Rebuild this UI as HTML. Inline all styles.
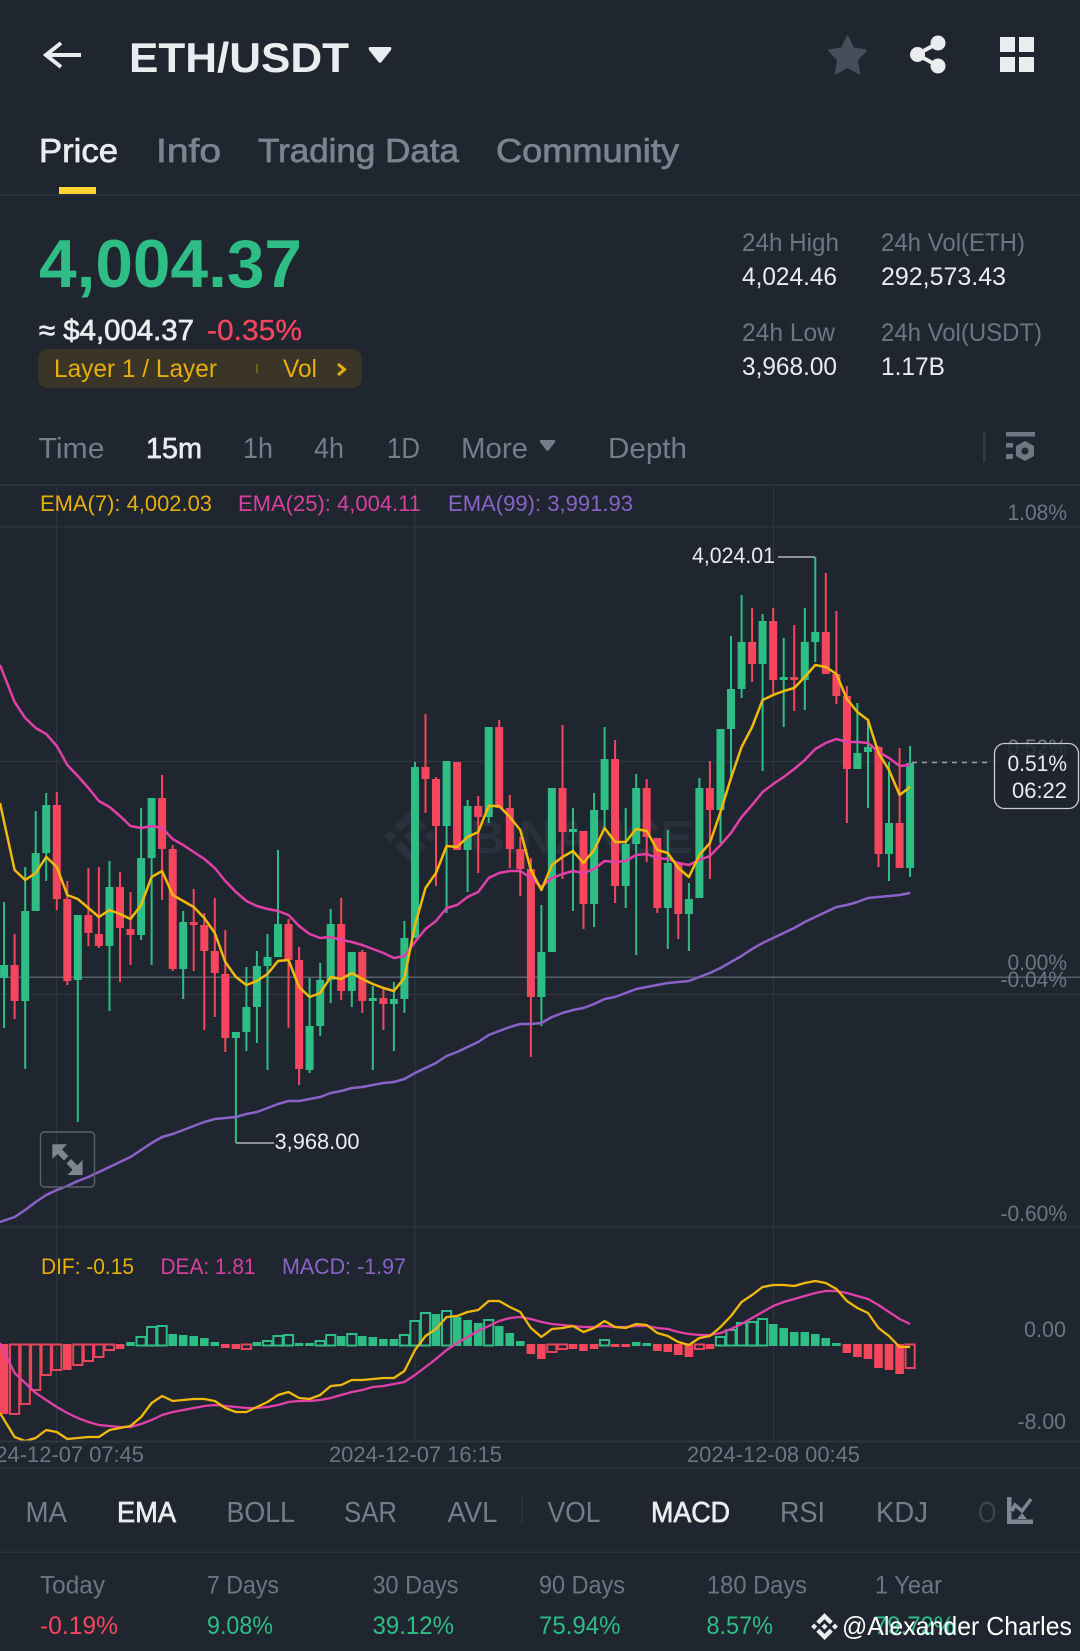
<!DOCTYPE html>
<html lang="en"><head><meta charset="utf-8"><title>ETH/USDT</title>
<style>
html,body{margin:0;padding:0;background:#1f2630;width:1080px;height:1651px;overflow:hidden}
svg{display:block}
text{font-family:"Liberation Sans","DejaVu Sans",sans-serif}
.g{fill:#757d8b}.w{fill:#eaecef}.d{fill:#6d7583}
.m{stroke-width:.7px}
</style></head><body>
<svg xmlns="http://www.w3.org/2000/svg" width="1080" height="1651" viewBox="0 0 1080 1651">
<rect width="1080" height="1651" fill="#1f2630"/>
<!-- header -->
<path d="M81 55H47M61 43L46 55L61 67" fill="none" stroke="#eaecef" stroke-width="4"/>
<text x="129" y="72" font-size="42" font-weight="700" fill="#eaecef" textLength="220" lengthAdjust="spacingAndGlyphs">ETH/USDT</text>
<path d="M370 47H390Q392 47 391 50L381.500 62Q380 63.500 378.500 62L369 50Q368 47 370 47Z" fill="#eaecef"/>
<path d="M847.500 36.500L853.300 48.500L866 50.500L856.800 59.800L859.300 73.500L847.500 67L835.700 73.500L838.200 59.800L829 50.500L841.700 48.500Z" fill="#474d5a" stroke="#474d5a" stroke-width="2" stroke-linejoin="round"/>
<path d="M938 43L917 54.500L938 66" fill="none" stroke="#eaecef" stroke-width="4"/>
<circle cx="938" cy="43" r="7.500" fill="#eaecef"/><circle cx="917.500" cy="54.500" r="7.500" fill="#eaecef"/><circle cx="938" cy="66" r="7.500" fill="#eaecef"/>
<path d="M1000 37h15v15h-15zM1019 37h15v15h-15zM1000 57h15v15h-15zM1019 57h15v15h-15z" fill="#eaecef"/>
<!-- tabs -->
<text x="39" y="162" font-size="33" fill="#eaecef" stroke="#eaecef" class="m" textLength="79" lengthAdjust="spacingAndGlyphs">Price</text>
<text x="156" y="162" font-size="33" fill="#7b8391" stroke="#7b8391" class="m" textLength="65" lengthAdjust="spacingAndGlyphs">Info</text>
<text x="258" y="162" font-size="33" fill="#7b8391" stroke="#7b8391" class="m" textLength="201" lengthAdjust="spacingAndGlyphs">Trading Data</text>
<text x="496" y="162" font-size="33" fill="#7b8391" stroke="#7b8391" class="m" textLength="183" lengthAdjust="spacingAndGlyphs">Community</text>
<rect x="59" y="187" width="37" height="7" fill="#fcd535"/>
<rect y="194.500" width="1080" height="1.500" fill="#2c333e"/>
<!-- price -->
<text x="39" y="287" font-size="68" font-weight="700" fill="#2ebd85" textLength="263" lengthAdjust="spacingAndGlyphs">4,004.37</text>
<text x="39" y="340" font-size="29" fill="#eaecef" stroke="#eaecef" class="m" textLength="155" lengthAdjust="spacingAndGlyphs">≈ $4,004.37</text>
<text x="207" y="340" font-size="29" fill="#f6465d" stroke="#f6465d" stroke-width=".3" textLength="95" lengthAdjust="spacingAndGlyphs">-0.35%</text>
<rect x="38.500" y="349" width="323" height="39" rx="9" fill="#3a3527"/>
<text x="54" y="377" font-size="25" fill="#e8ae0c" textLength="163" lengthAdjust="spacingAndGlyphs">Layer 1 / Layer</text>
<rect x="256" y="364" width="2" height="9" fill="#6e5c20"/>
<text x="283" y="377" font-size="25" fill="#e8ae0c" textLength="34" lengthAdjust="spacingAndGlyphs">Vol</text>
<path d="M338 364L344.500 369.500L338 375" fill="none" stroke="#e8ae0c" stroke-width="3"/>
<text x="742" y="251" font-size="25" class="d" textLength="97" lengthAdjust="spacingAndGlyphs">24h High</text>
<text x="742" y="285" font-size="25" class="w" textLength="95" lengthAdjust="spacingAndGlyphs">4,024.46</text>
<text x="881" y="251" font-size="25" class="d" textLength="144" lengthAdjust="spacingAndGlyphs">24h Vol(ETH)</text>
<text x="881" y="285" font-size="25" class="w" textLength="125" lengthAdjust="spacingAndGlyphs">292,573.43</text>
<text x="742" y="341" font-size="25" class="d" textLength="93" lengthAdjust="spacingAndGlyphs">24h Low</text>
<text x="742" y="375" font-size="25" class="w" textLength="95" lengthAdjust="spacingAndGlyphs">3,968.00</text>
<text x="881" y="341" font-size="25" class="d" textLength="161" lengthAdjust="spacingAndGlyphs">24h Vol(USDT)</text>
<text x="881" y="375" font-size="25" class="w" textLength="64" lengthAdjust="spacingAndGlyphs">1.17B</text>
<!-- timeframes -->
<text x="38.500" y="458" font-size="29" class="g" textLength="66" lengthAdjust="spacingAndGlyphs">Time</text>
<text x="146" y="458" font-size="29" fill="#eaecef" stroke="#eaecef" class="m" textLength="56" lengthAdjust="spacingAndGlyphs">15m</text>
<text x="243" y="458" font-size="29" class="g" textLength="30" lengthAdjust="spacingAndGlyphs">1h</text>
<text x="314" y="458" font-size="29" class="g" textLength="30" lengthAdjust="spacingAndGlyphs">4h</text>
<text x="387" y="458" font-size="29" class="g" textLength="33" lengthAdjust="spacingAndGlyphs">1D</text>
<text x="461" y="458" font-size="29" class="g" textLength="67" lengthAdjust="spacingAndGlyphs">More</text>
<path d="M541 440H554Q556 440 555 442L549 450Q547.500 451.500 546 450L540 442Q539 440 541 440Z" fill="#757d8b"/>
<text x="608" y="458" font-size="29" class="g" textLength="79" lengthAdjust="spacingAndGlyphs">Depth</text>
<rect x="983" y="432" width="2.500" height="30" fill="#333a45"/>
<path d="M1006 432h29v4.500h-29zM1006 443h7v4.500h-7zM1006 454h7v5h-7z" fill="#6f7785"/>
<path d="M1025 441L1034 446V456L1025 461L1016 456V446Z" fill="#6f7785"/><circle cx="1025" cy="451" r="3.500" fill="#1f2630"/>
<rect y="484" width="1080" height="2" fill="#2c333e"/>
<!-- grid -->
<path d="M56.500 486V1441M415 486V1441M773.500 486V1441M0 527H1080M0 761.500H1080M0 994.500H1080M0 1227H1080" stroke="#2e3541" stroke-width="1.200" fill="none"/>
<rect y="976.500" width="1080" height="1.500" fill="#565d69"/>
<!-- watermark -->
<g transform="translate(384 810) scale(.42)" fill="#2a313c"><path d="M38.700 53.100L63 28.800l24.300 24.300 14.200-14.100L63 .5 24.500 39zM.5 63l14.200-14.200L28.900 63 14.700 77.200zM38.700 72.900L63 97.200l24.300-24.300 14.200 14.100L63 125.500 24.500 87zM97.100 63l14.200-14.200L125.500 63l-14.200 14.200zM77.400 63L63 48.600 48.600 63 63 77.400z"/></g>
<text x="470" y="853" font-size="46" font-weight="700" fill="#2a313c" textLength="223" lengthAdjust="spacingAndGlyphs">BINANCE</text>
<!-- candles: wicks -->
<path fill="none" stroke="#2ebd85" stroke-width="2" d="M4.100 902V1028M25.200 867V1069M35.700 811V911M46.200 793V881M77.800 915V1122M109.500 861V1011M141.100 808V940M151.600 798V965M183.200 911V999M235.900 1032V1143M246.400 967V1051M256.900 951V1043M267.500 934V1070M278 850V957M309.600 978V1073M320.200 963V1036M330.700 909V1003M351.800 952V1007M372.800 986V1070M393.900 982V1051M404.400 921V1013M415 762V938M446.600 761V913M467.600 800V892M488.700 727V823M541.400 905V1026M573 808V911M594.100 793V927M604.600 727V830M625.700 808V908M636.200 774V955M667.800 830V949M688.900 883V951M699.400 778V898M720.500 729V843M731 636V780M741.600 595V698M762.600 614V771M783.700 638V727M804.800 608V710M815.300 557V662M857.400 703V769M868 720V808M889 762V881M910.100 746V877"/>
<path fill="none" stroke="#f6465d" stroke-width="2" d="M14.600 934V1019M56.800 792V910M67.300 881V985M88.400 868V946M98.900 867V948M120 872V982M130.500 892V965M162.100 775V900M172.700 845V971M193.700 889V971M204.300 913V1030M214.800 898V1017M225.300 930V1052M288.500 919V1028M299.100 947V1085M341.200 898V1000M362.300 950V1013M383.400 988V1030M425.500 714V813M436 777V886M478.200 796V873M499.200 720V808M509.800 795V868M520.300 837V896M530.900 858V1057M562.500 725V879M583.500 831V929M615.100 740V903M646.700 779V862M657.300 838V913M678.300 863V939M709.900 761V879M752.100 608V682M773.200 608V695M794.200 625V711M825.800 573V674M836.400 611V704M846.900 686V823M878.500 746V867M899.600 748V868"/>
<!-- candles: bodies -->
<path fill="none" stroke="#2ebd85" stroke-width="8" d="M4.100 965V978M25.200 911V1001M35.700 853V911M46.200 805V853M77.800 915V980M109.500 887V946M141.100 858V935M151.600 798V858M183.200 922V969M235.900 1032V1038M246.400 1007V1032M256.900 966V1007M267.500 957V966M278 924V957M309.600 1026V1070M320.200 980V1026M330.700 924V980M351.800 952V991M372.800 998V1001M393.900 999V1004M404.400 938V999M415 767V938M446.600 761V826M467.600 806V850M488.700 727V817M541.400 952V997M551.900 788V952M573 829V832M594.100 810V904M604.600 759V810M625.700 844V886M636.200 788V844M667.800 863V908M688.900 899V914M699.400 788V898M720.500 729V810M731 689V729M741.600 642V689M762.600 621V664M783.700 677V680M804.800 642V680M815.300 632V642M857.400 753V769M868 747V752M889 823V854M910.100 763V868"/>
<path fill="none" stroke="#f6465d" stroke-width="8" d="M14.600 965V1001M56.800 805V899M67.300 899V981M88.400 915V933M98.900 934V946M120 887V928M130.500 929V935M162.100 798V849M172.700 849V969M193.700 922V925M204.300 925V951M214.800 951V973M225.300 974V1038M288.500 924V960M299.100 960V1069M341.200 924V991M362.300 952V1001M383.400 998V1004M425.500 767V779M436 779V826M457.100 762V850M478.200 806V817M499.200 727V808M509.800 808V849M520.300 849V869M530.900 869V997M562.500 788V832M583.500 831V904M615.100 759V886M646.700 788V837M657.300 838V908M678.300 863V914M709.900 788V810M752.100 642V664M773.200 621V680M794.200 677V680M825.800 632V674M836.400 674V696M846.900 696V769M878.500 747V854M899.600 823V868"/>
<!-- EMA lines -->
<polyline fill="none" stroke="#8a63c8" stroke-width="2.500" stroke-linejoin="round" points="0,1222 14.600,1217 25.200,1210 35.700,1202 46.200,1195 56.800,1190 67.300,1186 77.800,1181 88.400,1177 98.900,1172 109.500,1167 120,1162 130.500,1157 141.100,1150 151.600,1143 162.100,1137 172.700,1134 183.200,1130 193.700,1126 204.300,1122 214.800,1119 225.300,1118 235.900,1117 246.400,1114 256.900,1112 267.500,1108 278,1104 288.500,1101 299.100,1101 309.600,1099 320.200,1097 330.700,1093 341.200,1091 351.800,1088 362.300,1087 372.800,1085 383.400,1083 393.900,1082 404.400,1079 415,1073 425.500,1068 436,1063 446.600,1056 457.100,1052 467.600,1047 478.200,1042 488.700,1035 499.200,1031 509.800,1027 520.300,1024 530.900,1024 541.400,1023 551.900,1017 562.500,1013 573,1010 583.500,1008 594.100,1004 604.600,999 615.100,997 625.700,993 636.200,989 646.700,987 657.300,985 667.800,983 678.300,982 688.900,981 699.400,977 709.900,973 720.500,968 731,962 741.600,956 752.100,949 762.600,943 773.200,938 783.700,933 794.200,928 804.800,922 815.300,917 825.800,912 836.400,907 846.900,905 857.400,902 868,898 878.500,897 889,896 899.600,895 910.100,893"/>
<polyline fill="none" stroke="#e23fa9" stroke-width="2.500" stroke-linejoin="round" points="0,665 14.600,702 25.200,718 35.700,728 46.200,734 56.800,746 67.300,765 77.800,776 88.400,788 98.900,801 109.500,807 120,816 130.500,826 141.100,828 151.600,826 162.100,828 172.700,839 183.200,845 193.700,852 204.300,859 214.800,868 225.300,881 235.900,892 246.400,901 256.900,906 267.500,909 278,911 288.500,915 299.100,926 309.600,934 320.200,938 330.700,937 341.200,940 351.800,942 362.300,945 372.800,949 383.400,953 393.900,958 404.400,956 415,942 425.500,929 436,921 446.600,908 457.100,905 467.600,897 478.200,892 488.700,878 499.200,873 509.800,871 520.300,871 530.900,878 541.400,887 551.900,878 562.500,874 573,871 583.500,873 594.100,869 604.600,861 615.100,862 625.700,861 636.200,855 646.700,854 657.300,858 667.800,859 678.300,863 688.900,865 699.400,860 709.900,856 720.500,845 731,833 741.600,817 752.100,805 762.600,792 773.200,784 783.700,777 794.200,769 804.800,760 815.300,749 825.800,743 836.400,739 846.900,742 857.400,742 868,743 878.500,752 889,758 899.600,766 910.100,765"/>
<polyline fill="none" stroke="#f0b90b" stroke-width="2.500" stroke-linejoin="round" points="0,803 14.600,870 25.200,880 35.700,873 46.200,857 56.800,867 67.300,895 77.800,899 88.400,908 98.900,917 109.500,910 120,914 130.500,919 141.100,905 151.600,877 162.100,871 172.700,895 183.200,901 193.700,907 204.300,918 214.800,933 225.300,962 235.900,977 246.400,985 256.900,981 267.500,974 278,961 288.500,960 299.100,987 309.600,997 320.200,993 330.700,977 341.200,979 351.800,973 362.300,979 372.800,984 383.400,988 393.900,991 404.400,978 415,925 425.500,888 436,873 446.600,846 457.100,847 467.600,837 478.200,832 488.700,806 499.200,806 509.800,817 520.300,830 530.900,870 541.400,890 551.900,865 562.500,857 573,851 583.500,863 594.100,850 604.600,828 615.100,842 625.700,842 636.200,829 646.700,831 657.300,850 667.800,853 678.300,868 688.900,877 699.400,855 709.900,843 720.500,812 731,778 741.600,747 752.100,727 762.600,700 773.200,695 783.700,691 794.200,688 804.800,677 815.300,665 825.800,667 836.400,674 846.900,699 857.400,712 868,720 878.500,753 889,770 899.600,795 910.100,787"/>
<!-- chart labels -->
<text x="40" y="511" font-size="22" fill="#e8ae0c" textLength="172" lengthAdjust="spacingAndGlyphs">EMA(7): 4,002.03</text>
<text x="238" y="511" font-size="22" fill="#d8409f" textLength="183" lengthAdjust="spacingAndGlyphs">EMA(25): 4,004.11</text>
<text x="448" y="511" font-size="22" fill="#8a63c8" textLength="185" lengthAdjust="spacingAndGlyphs">EMA(99): 3,991.93</text>
<text x="1007.500" y="520" font-size="22" class="d" textLength="59.500" lengthAdjust="spacingAndGlyphs">1.08%</text>
<text x="1007.500" y="755" font-size="22" class="d" textLength="59.500" lengthAdjust="spacingAndGlyphs">0.52%</text>
<text x="1007.500" y="970" font-size="22" class="d" textLength="59.500" lengthAdjust="spacingAndGlyphs">0.00%</text>
<text x="1000.500" y="987" font-size="22" class="d" textLength="66.500" lengthAdjust="spacingAndGlyphs">-0.04%</text>
<text x="1000.500" y="1221" font-size="22" class="d" textLength="66.500" lengthAdjust="spacingAndGlyphs">-0.60%</text>
<path d="M778 557H815" stroke="#b0b4ba" stroke-width="1.500" fill="none"/>
<text x="692" y="563" font-size="22" class="w" textLength="83" lengthAdjust="spacingAndGlyphs">4,024.01</text>
<path d="M236 1143H274" stroke="#b0b4ba" stroke-width="1.500" fill="none"/>
<text x="274.500" y="1149" font-size="22" class="w" textLength="85" lengthAdjust="spacingAndGlyphs">3,968.00</text>
<path d="M912 762.500H990" stroke="#9ba0a8" stroke-width="1.500" stroke-dasharray="5 5" fill="none"/>
<rect x="994.500" y="743.500" width="84" height="65" rx="10" fill="#1f2630" fill-opacity=".82" stroke="#c9ccd1" stroke-width="1.300"/>
<text x="1007.500" y="771" font-size="22" class="w" textLength="59.500" lengthAdjust="spacingAndGlyphs">0.51%</text>
<text x="1012" y="798" font-size="22" class="w" textLength="55" lengthAdjust="spacingAndGlyphs">06:22</text>
<!-- expand button -->
<rect x="40.500" y="1132" width="54" height="55" rx="4" fill="none" stroke="#5a616d" stroke-width="1.400"/>
<path d="M52.300 1144.300H67.100L62 1149.500L68.500 1156L64 1160.500L57.500 1154L52.300 1159ZM82.600 1175H67.500L72.600 1169.800L66.500 1163.500L71 1159L77.300 1165.300L82.600 1160Z" fill="#7d8591"/>
<!-- MACD -->
<text x="41" y="1274" font-size="22" fill="#e8ae0c" textLength="93" lengthAdjust="spacingAndGlyphs">DIF: -0.15</text>
<text x="160.500" y="1274" font-size="22" fill="#d8409f" textLength="95" lengthAdjust="spacingAndGlyphs">DEA: 1.81</text>
<text x="282" y="1274" font-size="22" fill="#8a63c8" textLength="124" lengthAdjust="spacingAndGlyphs">MACD: -1.97</text>
<text x="1024" y="1337" font-size="22" class="d" textLength="42" lengthAdjust="spacingAndGlyphs">0.00</text>
<text x="1017.500" y="1429" font-size="22" class="d" textLength="48.500" lengthAdjust="spacingAndGlyphs">-8.00</text>
<path fill="none" stroke="#2ebd85" stroke-width="8.600" d="M130.500 1342V1346M172.700 1334V1346M183.200 1335V1346M193.700 1336V1346M204.300 1338V1346M214.800 1342V1346M256.900 1342V1346M299.100 1343V1346M309.600 1343V1346M341.200 1336V1346M362.300 1336V1346M372.800 1337V1346M383.400 1339V1346M393.900 1339V1346M436 1314V1346M457.100 1317V1346M467.600 1320V1346M478.200 1323V1346M499.200 1326V1346M509.800 1333V1346M520.300 1341V1346M636.200 1342V1346M646.700 1343V1346M773.200 1324V1346M783.700 1328V1346M794.200 1332V1346M804.800 1332V1346M815.300 1334V1346M825.800 1338V1346M836.400 1343V1346"/>
<path fill="none" stroke="#f6465d" stroke-width="8.600" d="M4.100 1344V1414M67.300 1344V1370M120 1344V1349M225.300 1344V1348M235.900 1344V1349M530.900 1344V1354M541.400 1344V1359M573 1344V1349M583.500 1344V1351M594.100 1344V1349M615.100 1344V1347M625.700 1344V1347M657.300 1344V1351M667.800 1344V1352M678.300 1344V1355M688.900 1344V1357M709.900 1344V1349M846.900 1344V1353M857.400 1344V1357M868 1344V1359M878.500 1344V1368M889 1344V1370M899.600 1344V1374"/>
<path fill="none" stroke="#2ebd85" stroke-width="2" d="M136.500 1337h9.200V1345.500h-9.200zM147 1327h9.200V1345.500h-9.200zM157.500 1326h9.200V1345.500h-9.200zM262.900 1341h9.200V1345.500h-9.200zM273.400 1336h9.200V1345.500h-9.200zM283.900 1335h9.200V1345.500h-9.200zM315.600 1341h9.200V1345.500h-9.200zM326.100 1335h9.200V1345.500h-9.200zM347.200 1334h9.200V1345.500h-9.200zM399.800 1335h9.200V1345.500h-9.200zM410.400 1321h9.200V1345.500h-9.200zM420.900 1313h9.200V1345.500h-9.200zM442 1311h9.200V1345.500h-9.200zM484.100 1320h9.200V1345.500h-9.200zM600 1340h9.200V1345.500h-9.200zM715.900 1337h9.200V1345.500h-9.200zM726.400 1330h9.200V1345.500h-9.200zM737 1323h9.200V1345.500h-9.200zM747.500 1322h9.200V1345.500h-9.200zM758 1319h9.200V1345.500h-9.200z"/>
<path fill="none" stroke="#e8445a" stroke-width="2" d="M10 1344.500h9.200V1414h-9.200zM20.600 1344.500h9.200V1404h-9.200zM31.100 1344.500h9.200V1390h-9.200zM41.600 1344.500h9.200V1375h-9.200zM52.200 1344.500h9.200V1370h-9.200zM73.200 1344.500h9.200V1365h-9.200zM83.800 1344.500h9.200V1361h-9.200zM94.300 1344.500h9.200V1357h-9.200zM104.900 1344.500h9.200V1350h-9.200zM241.800 1344.500h9.200V1349h-9.200zM547.300 1344.500h9.200V1352h-9.200zM557.900 1344.500h9.200V1349h-9.200zM694.800 1344.500h9.200V1349h-9.200zM905.500 1344.500h9.200V1368h-9.200z"/>
<polyline fill="none" stroke="#e23fa9" stroke-width="2.300" stroke-linejoin="round" points="0,1343 14.600,1373 25.200,1383 35.700,1393 46.200,1400 56.800,1407 67.300,1413 77.800,1418 88.400,1422 98.900,1425 109.500,1426 120,1427 130.500,1427 141.100,1424 151.600,1420 162.100,1415 172.700,1412 183.200,1410 193.700,1408 204.300,1406 214.800,1405 225.300,1406 235.900,1407 246.400,1408 256.900,1408 267.500,1407 278,1405 288.500,1402 299.100,1401 309.600,1401 320.200,1400 330.700,1398 341.200,1395 351.800,1392 362.300,1390 372.800,1387 383.400,1386 393.900,1384 404.400,1382 415,1375 425.500,1367 436,1359 446.600,1350 457.100,1343 467.600,1337 478.200,1331 488.700,1326 499.200,1321 509.800,1318 520.300,1317 530.900,1319 541.400,1322 551.900,1324 562.500,1325 573,1326 583.500,1327 594.100,1327 604.600,1326 615.100,1327 625.700,1327 636.200,1326 646.700,1326 657.300,1328 667.800,1329 678.300,1332 688.900,1334 699.400,1335 709.900,1335 720.500,1333 731,1329 741.600,1324 752.100,1318 762.600,1312 773.200,1306 783.700,1302 794.200,1299 804.800,1296 815.300,1293 825.800,1291 836.400,1291 846.900,1293 857.400,1296 868,1299 878.500,1305 889,1312 899.600,1319 910.100,1324"/>
<polyline fill="none" stroke="#f0b90b" stroke-width="2.300" stroke-linejoin="round" points="0,1413 14.600,1437 25.200,1441 35.700,1438 46.200,1430 56.800,1432 67.300,1439 77.800,1438 88.400,1437 98.900,1437 109.500,1430 120,1428 130.500,1426 141.100,1417 151.600,1403 162.100,1396 172.700,1401 183.200,1400 193.700,1399 204.300,1399 214.800,1401 225.300,1408 235.900,1412 246.400,1412 256.900,1407 267.500,1402 278,1395 288.500,1392 299.100,1398 309.600,1399 320.200,1395 330.700,1386 341.200,1385 351.800,1380 362.300,1380 372.800,1379 383.400,1378 393.900,1378 404.400,1371 415,1350 425.500,1336 436,1329 446.600,1317 457.100,1316 467.600,1312 478.200,1310 488.700,1301 499.200,1301 509.800,1307 520.300,1312 530.900,1328 541.400,1337 551.900,1329 562.500,1328 573,1326 583.500,1332 594.100,1328 604.600,1321 615.100,1327 625.700,1328 636.200,1324 646.700,1325 657.300,1333 667.800,1336 678.300,1342 688.900,1345 699.400,1338 709.900,1336 720.500,1327 731,1316 741.600,1302 752.100,1295 762.600,1287 773.200,1285 783.700,1285 794.200,1286 804.800,1283 815.300,1281 825.800,1283 836.400,1289 846.900,1301 857.400,1308 868,1313 878.500,1328 889,1336 899.600,1347 910.100,1347"/>
<rect y="1440.500" width="1080" height="2" fill="#2e3541"/>
<text x="-29" y="1462" font-size="22" class="d" textLength="173" lengthAdjust="spacingAndGlyphs">2024-12-07 07:45</text>
<text x="329" y="1462" font-size="22" class="d" textLength="173" lengthAdjust="spacingAndGlyphs">2024-12-07 16:15</text>
<text x="687" y="1462" font-size="22" class="d" textLength="173" lengthAdjust="spacingAndGlyphs">2024-12-08 00:45</text>
<rect y="1467.500" width="1080" height="1.500" fill="#2c333e"/>
<!-- indicators -->
<text x="25.500" y="1522" font-size="29" class="g" textLength="41.500" lengthAdjust="spacingAndGlyphs">MA</text>
<text x="117" y="1522" font-size="29" fill="#eaecef" stroke="#eaecef" class="m" textLength="59" lengthAdjust="spacingAndGlyphs">EMA</text>
<text x="226.500" y="1522" font-size="29" class="g" textLength="68.500" lengthAdjust="spacingAndGlyphs">BOLL</text>
<text x="344" y="1522" font-size="29" class="g" textLength="53" lengthAdjust="spacingAndGlyphs">SAR</text>
<text x="447.500" y="1522" font-size="29" class="g" textLength="50" lengthAdjust="spacingAndGlyphs">AVL</text>
<rect x="521.500" y="1495" width="1.500" height="28" fill="#2e3541"/>
<text x="547.500" y="1522" font-size="29" class="g" textLength="53" lengthAdjust="spacingAndGlyphs">VOL</text>
<text x="651" y="1522" font-size="29" fill="#eaecef" stroke="#eaecef" class="m" textLength="79" lengthAdjust="spacingAndGlyphs">MACD</text>
<text x="780" y="1522" font-size="29" class="g" textLength="45" lengthAdjust="spacingAndGlyphs">RSI</text>
<text x="876" y="1522" font-size="29" class="g" textLength="52" lengthAdjust="spacingAndGlyphs">KDJ</text>
<text x="978" y="1522" font-size="29" fill="#3e4551" textLength="18.500" lengthAdjust="spacingAndGlyphs">O</text>
<path d="M1007 1497h4.500v22.500h21.500v4.500h-26z" fill="#7e8693"/>
<path d="M1012 1511L1015 1505L1022 1511L1031 1499" fill="none" stroke="#7e8693" stroke-width="3.500"/>
<path d="M1022 1513L1027 1519H1017Z" fill="#7e8693"/>
<rect y="1551.500" width="1080" height="1.500" fill="#2c333e"/>
<!-- performance -->
<text x="40" y="1593.500" font-size="25" class="d" textLength="65" lengthAdjust="spacingAndGlyphs">Today</text>
<text x="207" y="1593.500" font-size="25" class="d" textLength="72" lengthAdjust="spacingAndGlyphs">7 Days</text>
<text x="372.500" y="1593.500" font-size="25" class="d" textLength="86" lengthAdjust="spacingAndGlyphs">30 Days</text>
<text x="539" y="1593.500" font-size="25" class="d" textLength="86" lengthAdjust="spacingAndGlyphs">90 Days</text>
<text x="707" y="1593.500" font-size="25" class="d" textLength="100" lengthAdjust="spacingAndGlyphs">180 Days</text>
<text x="875" y="1593.500" font-size="25" class="d" textLength="67" lengthAdjust="spacingAndGlyphs">1 Year</text>
<text x="40" y="1634" font-size="25" fill="#f6465d" textLength="78" lengthAdjust="spacingAndGlyphs">-0.19%</text>
<text x="207" y="1634" font-size="25" fill="#2ebd85" textLength="66" lengthAdjust="spacingAndGlyphs">9.08%</text>
<text x="372.500" y="1634" font-size="25" fill="#2ebd85" textLength="81.500" lengthAdjust="spacingAndGlyphs">39.12%</text>
<text x="539" y="1634" font-size="25" fill="#2ebd85" textLength="81.500" lengthAdjust="spacingAndGlyphs">75.94%</text>
<text x="706.500" y="1634" font-size="25" fill="#2ebd85" textLength="66.500" lengthAdjust="spacingAndGlyphs">8.57%</text>
<text x="874" y="1634" font-size="25" fill="#2ebd85" textLength="81" lengthAdjust="spacingAndGlyphs">79.72%</text>
<!-- user watermark -->
<g transform="translate(811 1613) scale(.215)" fill="#eaecef"><path d="M38.700 53.100L63 28.800l24.300 24.300 14.200-14.100L63 .5 24.500 39zM.5 63l14.200-14.200L28.900 63 14.700 77.200zM38.700 72.900L63 97.200l24.300-24.300 14.200 14.100L63 125.500 24.500 87zM97.100 63l14.200-14.200L125.500 63l-14.200 14.200zM77.400 63L63 48.600 48.600 63 63 77.400z"/></g>
<text x="842" y="1635" font-size="26" fill="#ffffff" textLength="230" lengthAdjust="spacingAndGlyphs">@Alexander Charles</text>
</svg>
</body></html>
